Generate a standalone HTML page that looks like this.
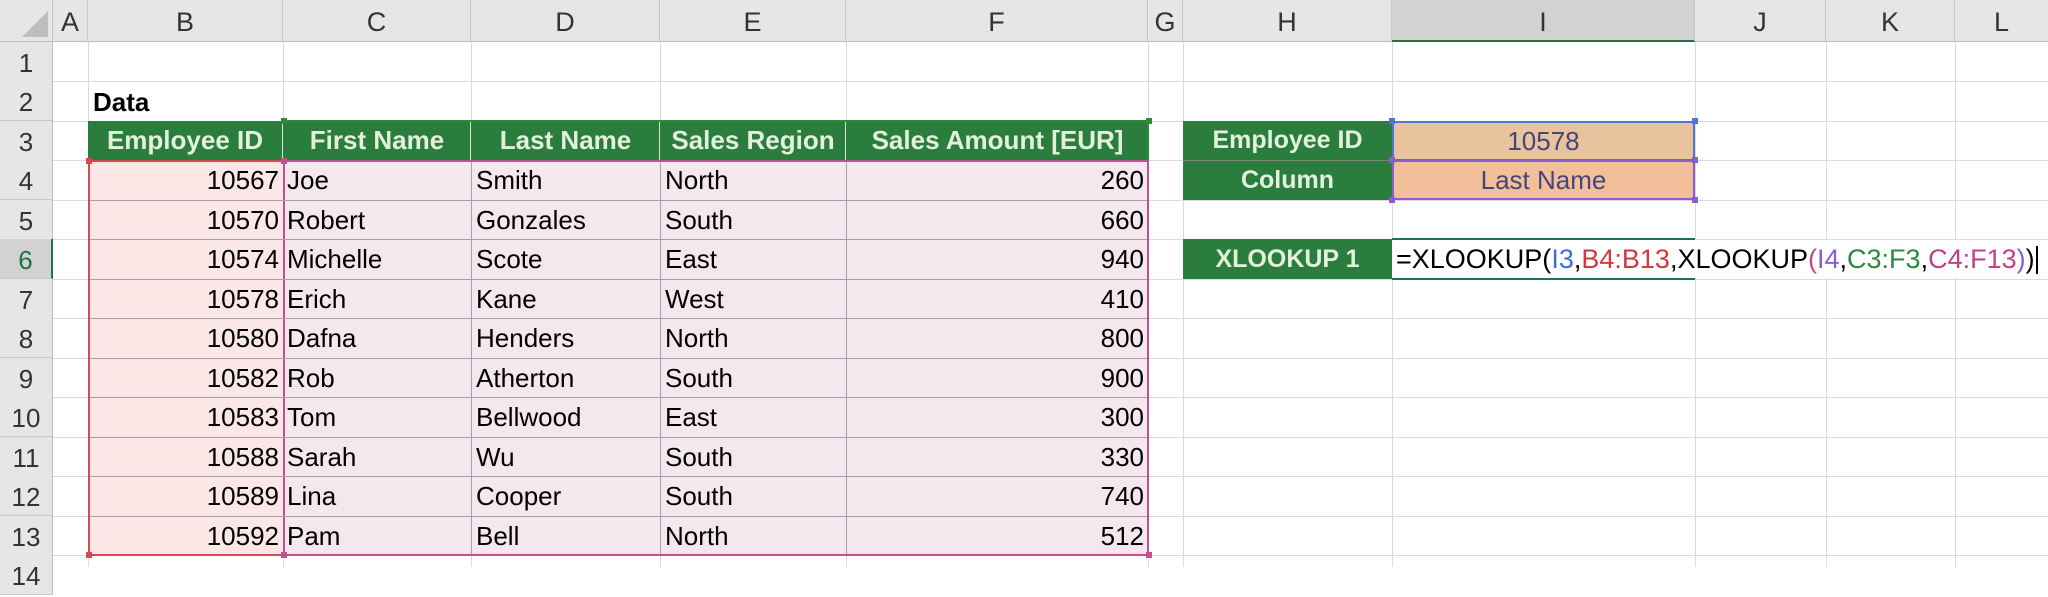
<!DOCTYPE html>
<html><head><meta charset="utf-8"><style>
*{margin:0;padding:0;box-sizing:border-box}
body{width:2048px;height:567px;overflow:hidden;background:#fff;position:relative;font-family:"Liberation Sans",Arial,sans-serif}
div{position:absolute}
.v{width:1px;top:42px;height:525px;background:#dadada}
.h{height:1px;left:53px;width:1995px;background:#dadada}
.ch{top:0;height:42px;background:#e6e6e6;border-right:1px solid #c6c6c6;border-bottom:1px solid #bdbdbd;color:#333;font-size:27px;line-height:44px;text-align:center}
.rh{left:0;width:53px;height:40px;background:#e6e6e6;border-bottom:1px solid #c6c6c6;border-right:1px solid #bdbdbd;color:#333;font-size:26px;line-height:42px;text-align:center}
.t{font-size:26px;line-height:40px;height:40px;color:#000;white-space:nowrap}
.r{text-align:right;padding-right:4px}
.g{background:#2b7d3e;color:#e3f1dc;font-weight:bold;font-size:26px;line-height:39px;text-align:center;height:39px;white-space:nowrap}
</style></head><body>
<div class="v" style="left:88px"></div><div class="v" style="left:283px"></div><div class="v" style="left:471px"></div><div class="v" style="left:660px"></div><div class="v" style="left:846px"></div><div class="v" style="left:1148px"></div><div class="v" style="left:1183px"></div><div class="v" style="left:1392px"></div><div class="v" style="left:1695px"></div><div class="v" style="left:1826px"></div><div class="v" style="left:1955px"></div>
<div class="h" style="top:81px"></div><div class="h" style="top:121px"></div><div class="h" style="top:160px"></div><div class="h" style="top:200px"></div><div class="h" style="top:239px"></div><div class="h" style="top:279px"></div><div class="h" style="top:318px"></div><div class="h" style="top:358px"></div><div class="h" style="top:397px"></div><div class="h" style="top:437px"></div><div class="h" style="top:476px"></div><div class="h" style="top:516px"></div><div class="h" style="top:555px"></div>
<div class="ch" style="left:0;width:53px"><div style="right:4px;bottom:4px;width:0;height:0;border-left:26px solid transparent;border-bottom:26px solid #bdbdbd"></div></div>
<div class="ch" style="left:53px;width:35px">A</div>
<div class="ch" style="left:88px;width:195px">B</div>
<div class="ch" style="left:283px;width:188px">C</div>
<div class="ch" style="left:471px;width:189px">D</div>
<div class="ch" style="left:660px;width:186px">E</div>
<div class="ch" style="left:846px;width:302px">F</div>
<div class="ch" style="left:1148px;width:35px">G</div>
<div class="ch" style="left:1183px;width:209px">H</div>
<div class="ch" style="left:1392px;width:303px;background:#d2d2d2;border-bottom:2px solid #217346">I</div>
<div class="ch" style="left:1695px;width:131px">J</div>
<div class="ch" style="left:1826px;width:129px">K</div>
<div class="ch" style="left:1955px;width:93px;border-right:none">L</div>
<div class="rh" style="top:42px">1</div><div class="rh" style="top:81px">2</div><div class="rh" style="top:121px">3</div><div class="rh" style="top:160px">4</div><div class="rh" style="top:200px">5</div>
<div class="rh" style="top:239px;background:#d2d2d2;color:#217346;border-right:2px solid #217346">6</div>
<div class="rh" style="top:279px">7</div><div class="rh" style="top:318px">8</div><div class="rh" style="top:358px">9</div><div class="rh" style="top:397px">10</div><div class="rh" style="top:437px">11</div><div class="rh" style="top:476px">12</div><div class="rh" style="top:516px">13</div><div class="rh" style="top:555px">14</div>
<div class="t" style="left:93px;top:82px;font-weight:bold">Data</div>
<div class="g" style="left:88px;top:121px;width:1060px"></div>
<div class="g" style="left:88px;top:121px;width:195px;border-right:1px solid #d8e8d8">Employee ID</div>
<div class="g" style="left:284px;top:121px;width:187px;border-right:1px solid #d8e8d8">First Name</div>
<div class="g" style="left:472px;top:121px;width:188px;border-right:1px solid #d8e8d8">Last Name</div>
<div class="g" style="left:661px;top:121px;width:185px;border-right:1px solid #d8e8d8">Sales Region</div>
<div class="g" style="left:847px;top:121px;width:301px">Sales Amount [EUR]</div>
<div style="left:283px;top:120px;width:866px;height:2px;background:#2b8a3e"></div>
<div style="left:1147px;top:120px;width:2px;height:41px;background:#2b8a3e"></div>
<div style="left:281px;top:118px;width:6px;height:6px;background:#2b8a3e"></div>
<div style="left:1146px;top:118px;width:6px;height:6px;background:#2b8a3e"></div>
<div style="left:88px;top:160px;width:195px;height:396px;background:#fbe7e6;border:2px solid #d24b55;border-right:none"></div>
<div style="left:283px;top:160px;width:866px;height:396px;background:#f5e7ee;border:2px solid #c0508f"></div>
<div style="left:471px;top:162px;width:1px;height:392px;background:#a8a0a8"></div>
<div style="left:660px;top:162px;width:1px;height:392px;background:#a8a0a8"></div>
<div style="left:846px;top:162px;width:1px;height:392px;background:#a8a0a8"></div>
<div style="left:90px;top:200px;width:1057px;height:1px;background:#a8a0a8"></div><div style="left:90px;top:239px;width:1057px;height:1px;background:#a8a0a8"></div><div style="left:90px;top:279px;width:1057px;height:1px;background:#a8a0a8"></div><div style="left:90px;top:318px;width:1057px;height:1px;background:#a8a0a8"></div><div style="left:90px;top:358px;width:1057px;height:1px;background:#a8a0a8"></div><div style="left:90px;top:397px;width:1057px;height:1px;background:#a8a0a8"></div><div style="left:90px;top:437px;width:1057px;height:1px;background:#a8a0a8"></div><div style="left:90px;top:476px;width:1057px;height:1px;background:#a8a0a8"></div><div style="left:90px;top:516px;width:1057px;height:1px;background:#a8a0a8"></div>
<div style="left:86px;top:158px;width:6px;height:6px;background:#d24b55"></div><div style="left:86px;top:552px;width:6px;height:6px;background:#d24b55"></div>
<div style="left:281px;top:158px;width:6px;height:6px;background:#c0508f"></div><div style="left:281px;top:552px;width:6px;height:6px;background:#c0508f"></div><div style="left:1146px;top:552px;width:6px;height:6px;background:#c0508f"></div>
<div class="t r" style="left:88px;width:195px;top:160px">10567</div><div class="t" style="left:287px;top:160px">Joe</div><div class="t" style="left:476px;top:160px">Smith</div><div class="t" style="left:665px;top:160px">North</div><div class="t r" style="left:846px;width:302px;top:160px">260</div>
<div class="t r" style="left:88px;width:195px;top:200px">10570</div><div class="t" style="left:287px;top:200px">Robert</div><div class="t" style="left:476px;top:200px">Gonzales</div><div class="t" style="left:665px;top:200px">South</div><div class="t r" style="left:846px;width:302px;top:200px">660</div>
<div class="t r" style="left:88px;width:195px;top:239px">10574</div><div class="t" style="left:287px;top:239px">Michelle</div><div class="t" style="left:476px;top:239px">Scote</div><div class="t" style="left:665px;top:239px">East</div><div class="t r" style="left:846px;width:302px;top:239px">940</div>
<div class="t r" style="left:88px;width:195px;top:279px">10578</div><div class="t" style="left:287px;top:279px">Erich</div><div class="t" style="left:476px;top:279px">Kane</div><div class="t" style="left:665px;top:279px">West</div><div class="t r" style="left:846px;width:302px;top:279px">410</div>
<div class="t r" style="left:88px;width:195px;top:318px">10580</div><div class="t" style="left:287px;top:318px">Dafna</div><div class="t" style="left:476px;top:318px">Henders</div><div class="t" style="left:665px;top:318px">North</div><div class="t r" style="left:846px;width:302px;top:318px">800</div>
<div class="t r" style="left:88px;width:195px;top:358px">10582</div><div class="t" style="left:287px;top:358px">Rob</div><div class="t" style="left:476px;top:358px">Atherton</div><div class="t" style="left:665px;top:358px">South</div><div class="t r" style="left:846px;width:302px;top:358px">900</div>
<div class="t r" style="left:88px;width:195px;top:397px">10583</div><div class="t" style="left:287px;top:397px">Tom</div><div class="t" style="left:476px;top:397px">Bellwood</div><div class="t" style="left:665px;top:397px">East</div><div class="t r" style="left:846px;width:302px;top:397px">300</div>
<div class="t r" style="left:88px;width:195px;top:437px">10588</div><div class="t" style="left:287px;top:437px">Sarah</div><div class="t" style="left:476px;top:437px">Wu</div><div class="t" style="left:665px;top:437px">South</div><div class="t r" style="left:846px;width:302px;top:437px">330</div>
<div class="t r" style="left:88px;width:195px;top:476px">10589</div><div class="t" style="left:287px;top:476px">Lina</div><div class="t" style="left:476px;top:476px">Cooper</div><div class="t" style="left:665px;top:476px">South</div><div class="t r" style="left:846px;width:302px;top:476px">740</div>
<div class="t r" style="left:88px;width:195px;top:516px">10592</div><div class="t" style="left:287px;top:516px">Pam</div><div class="t" style="left:476px;top:516px">Bell</div><div class="t" style="left:665px;top:516px">North</div><div class="t r" style="left:846px;width:302px;top:516px">512</div>
<div class="g" style="left:1183px;top:121px;width:209px;height:40px;border-bottom:1px solid #7a8a7a;font-size:25px">Employee ID</div>
<div class="g" style="left:1183px;top:161px;width:209px;height:39px;font-size:25px">Column</div>
<div style="left:1392px;top:121px;width:303px;height:40px;background:#e9c39e;border:2px solid #4a78d0;color:#44467a;font-size:26px;line-height:37px;text-align:center">10578</div>
<div style="left:1392px;top:160px;width:303px;height:40px;background:#f1c09b;border:2px solid #8a5ed0;color:#44467a;font-size:26px;line-height:37px;text-align:center">Last Name</div>
<div style="left:1389px;top:118px;width:6px;height:6px;background:#4a78d0"></div><div style="left:1692px;top:118px;width:6px;height:6px;background:#4a78d0"></div>
<div style="left:1389px;top:157px;width:6px;height:6px;background:#8a5ed0"></div><div style="left:1692px;top:157px;width:6px;height:6px;background:#8a5ed0"></div>
<div style="left:1389px;top:197px;width:6px;height:6px;background:#8a5ed0"></div><div style="left:1692px;top:197px;width:6px;height:6px;background:#8a5ed0"></div>
<div class="g" style="left:1183px;top:239px;width:209px;height:40px;line-height:40px;font-size:25px">XLOOKUP 1</div>
<div style="left:1392px;top:238px;width:303px;height:2px;background:#217346"></div>
<div style="left:1392px;top:278px;width:303px;height:2px;background:#217346"></div>
<div style="left:1392px;top:240px;width:656px;height:38px;background:#fff"></div>
<div class="t" style="left:1396px;top:239px;font-size:27px">=XLOOKUP(<span style="color:#3d6fd6">I3</span>,<span style="color:#d03a3a">B4:B13</span>,XLOOKUP<span style="color:#c04a8a">(</span><span style="color:#8a5ed0">I4</span>,<span style="color:#2b8a3e">C3:F3</span>,<span style="color:#c0408a">C4:F13</span><span style="color:#8a5ed0">)</span>)</div>
<div style="left:2036px;top:246px;width:2px;height:28px;background:#000"></div>
</body></html>
